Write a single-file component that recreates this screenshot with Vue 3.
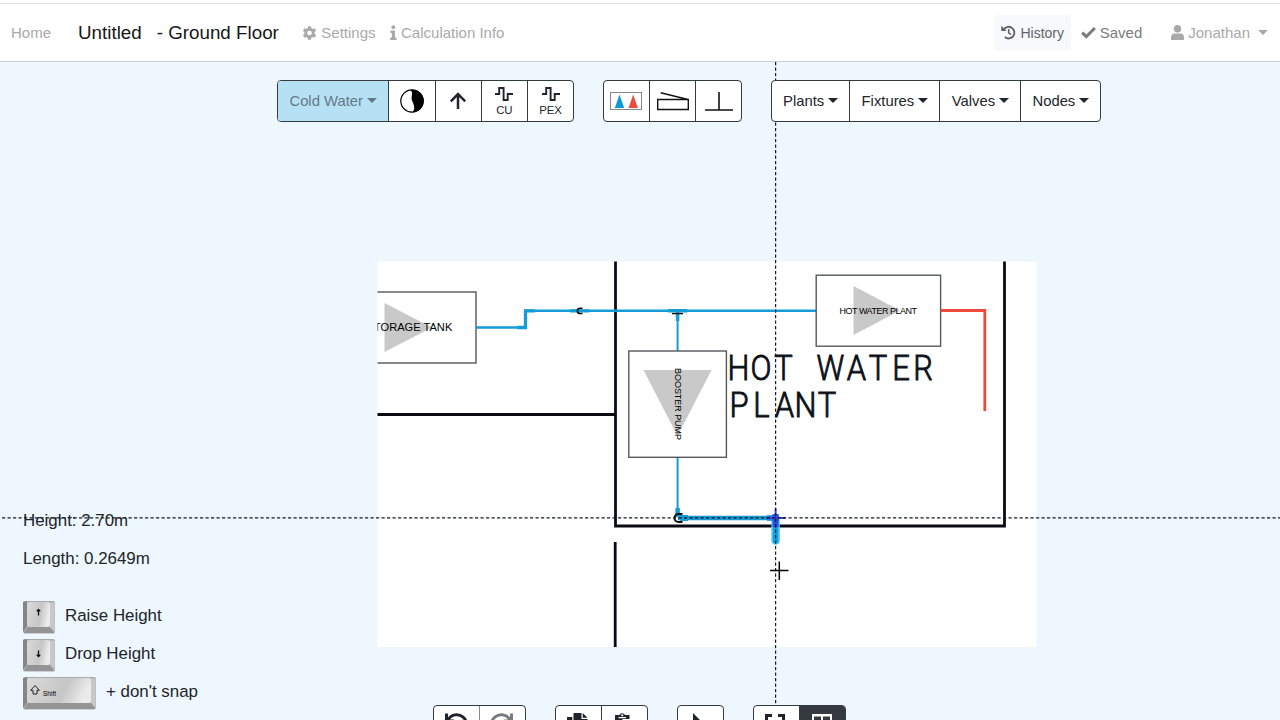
<template>
  <div class="editor">
    <header class="navbar">
      <a class="nav-home">Home</a>
      <h1 class="doc-title">Untitled</h1>
      <span class="doc-level">- Ground Floor</span>
      <a class="nav-link nav-settings">
        <svg class="icon" width="15" height="15" viewBox="0 0 16 16">
          <path
            fill="currentColor"
            fill-rule="evenodd"
            d="M6.5 0h3l.4 2.1 1.6.9 2-.8L15 4.800l-1.600 1.400v1.800l1.600 1.700-1.500 2.600-2-.8-1.600.9-.4 2.100h-3l-.4-2.100-1.600-.9-2 .8L1 9.700l1.600-1.500V6.300L1 4.800l1.500-2.600 2 .8 1.600-.9zM8 4.800a2.500 2.500 0 1 0 0 5 2.500 2.500 0 0 0 0-5z"
            transform="translate(0 1.200)"
          />
        </svg>
        Settings
      </a>
      <a class="nav-link nav-info">
        <svg class="icon" width="7" height="15" viewBox="0 0 7 15">
          <circle cx="3.300" cy="2.200" r="1.900" fill="currentColor" />
          <path fill="currentColor" d="M.4 5.500h4.500v7h1.600V15H.2v-2.500h1.700V8H.4z" />
        </svg>
        Calculation Info
      </a>
      <div class="nav-right">
        <button class="history">
          <svg class="icon" width="15" height="15" viewBox="0 0 16 16">
            <path fill="none" stroke="currentColor" stroke-width="2" d="M2.600 5.300A6.200 6.200 0 1 1 4 12.800" />
            <path fill="currentColor" d="M.3.800v5.700H6z" />
            <path fill="none" stroke="currentColor" stroke-width="1.700" d="M8.200 4.200v4.200l2.500 1.900" />
          </svg>
          History
        </button>
        <span class="saved">
          <svg class="icon" width="15" height="13" viewBox="0 0 15 13">
            <path fill="none" stroke="currentColor" stroke-width="3" d="M1.200 6.600l4.100 4L13.900 2" />
          </svg>
          Saved
        </span>
        <a class="user">
          <svg class="icon" width="13" height="15" viewBox="0 0 13 15">
            <circle cx="6.500" cy="3.800" r="3.700" fill="currentColor" />
            <path fill="currentColor" d="M0 15v-2.500C0 10 1.500 8.500 3.500 8.500h6c2 0 3.500 1.500 3.500 4V15z" />
          </svg>
          Jonathan
          <i class="caret"></i>
        </a>
      </div>
    </header>

    <main class="stage">
      <svg class="drawing" width="1280" height="658" viewBox="0 62 1280 658">
        <defs>
          <clipPath id="sheet">
            <rect x="377.500" y="261.500" width="659" height="385.500" />
          </clipPath>
        </defs>
        <rect x="377.500" y="261.500" width="659" height="385.500" fill="#fff" />

        <g clip-path="url(#sheet)">
          <!-- walls -->
          <g fill="none" stroke="#080c12" stroke-width="2.800">
            <path d="M615.500 261V526H1004.500V261" />
            <path d="M377 414.500H615" />
            <path d="M615.200 542V647" />
          </g>
          <g class="room-name" :transform="`scale(${letterScale} 1)`">
            <text v-for="row in roomName" :key="row.y" :y="row.y" text-anchor="middle">
              <tspan v-for="item in row.letters" :key="item.x" :x="item.x / letterScale">{{ item.ch }}</tspan>
            </text>
          </g>

          <!-- storage tank -->
          <rect class="plant" x="340" y="292" width="136" height="71" />
          <path class="flow-mark" d="M384.500 303v49L432 327.500z" />
          <text class="label-tank" x="452.300" y="331.300" text-anchor="end">STORAGE TANK</text>
        </g>

        <!-- cold water pipes -->
        <g fill="none" stroke="#159bd7" stroke-width="2.500">
          <path d="M476 327.500H525.500V310.800H816" />
          <path stroke-width="3.300" d="M517 327.500H525.500V310.800H535M570 310.800H589" />
          <path stroke-width="2" d="M677.600 311V351M677.600 457V517" />
          <path stroke-width="3.500" d="M677.600 312V321M668 310.800H687" />
          <path stroke-width="4.500" d="M677.600 508V517" />
        </g>
        <path fill="none" stroke="#111" stroke-width="1.600" d="M582.500 308.300h-2.500a2.600 2.600 0 0 0 0 5.200h2.500" />
        <path stroke="#111" stroke-width="1.400" d="M672 313.600H683" />

        <!-- booster pump -->
        <rect class="plant" x="628.800" y="351" width="97.600" height="106.300" />
        <path class="flow-mark" d="M643.500 370h68L677.500 436z" />
        <text class="label-pump" x="0" y="0" textLength="72" transform="translate(674.800 368) rotate(90)">BOOSTER PUMP</text>

        <!-- hot water plant -->
        <rect class="plant" x="816.200" y="275.200" width="124.400" height="71" />
        <path class="flow-mark" d="M853.500 286v49L900 310.500z" />
        <text class="label-hot" x="839.500" y="313.500" textLength="77.500">HOT WATER PLANT</text>
        <path fill="none" stroke="#ee4a3c" stroke-width="2.800" d="M940.500 310.500H984.800V411" />

        <!-- pipe being drawn -->
        <path stroke="#159bd7" stroke-width="4.500" d="M678 518H776" />
        <path stroke="#159bd7" stroke-width="6" d="M680 518H688" />
        <path stroke="#4cc5f1" stroke-width="8.500" stroke-linecap="round" d="M775.600 521V540.500" />
        <path stroke="#0f9fe2" stroke-width="5" d="M775.600 518V543" />
        <path fill="none" stroke="#111" stroke-width="2" d="M682.500 514h-4a4 4 0 0 0 0 8h4" />
        <path stroke="#1f7fe6" stroke-width="5.500" d="M767 518H779" />
        <path stroke="#1c55e6" stroke-width="6" d="M775.600 514V527" />
        <path stroke="#3a3fe0" stroke-width="2" d="M766 518H785.500M775.600 508.500V528" />

        <!-- snap guides -->
        <g stroke="#161b24" stroke-width="1.200" stroke-dasharray="3.200 2.300">
          <path d="M2 517.900H1280" />
          <path d="M775.600 62V720" />
        </g>
        <path stroke="#000" stroke-width="1.500" d="M770 570.500H788.500M779.300 561.500V580" />
      </svg>

      <div class="toolbar toolbar-top">
        <div class="btn-group">
          <button class="tool tool-system">Cold Water<i class="caret"></i></button>
          <button class="tool tool-icon">
            <svg width="24" height="24" viewBox="0 0 24 24">
              <circle cx="12" cy="12" r="11.200" fill="#fff" stroke="#000" stroke-width="1.200" />
              <path d="M10.500 1A11.200 11.200 0 1 1 12.500 23.200C16.500 18.500 12.500 14 11.700 10.500 11 7 13.500 4 10.500 1z" />
            </svg>
          </button>
          <button class="tool tool-icon">
            <svg width="18" height="18" viewBox="0 0 18 18">
              <path fill="none" stroke="#212529" stroke-width="2.500" d="M9 17V2.500M1.800 9.300L9 2.100l7.200 7.200" />
            </svg>
          </button>
          <button v-for="name in ['CU', 'PEX']" :key="name" class="tool tool-icon tool-pipe">
            <svg width="18" height="14" viewBox="0 0 18 14">
              <path fill="none" stroke="#212529" stroke-width="1.900" d="M0 7H4.200V1H8.600V13H12.700V7H18" />
            </svg>
            <span>{{ name }}</span>
          </button>
        </div>

        <div class="btn-group">
          <button class="tool tool-icon">
            <svg width="32" height="20" viewBox="0 0 32 20">
              <rect x=".5" y="1.500" width="31" height="17" fill="#fff" stroke="#888" />
              <path fill="#0f98d8" d="M9.500 3.500L14.200 17H4.800z" />
              <path fill="#ee4a3c" d="M23.200 3.500L27.900 17h-9.400z" />
            </svg>
          </button>
          <button class="tool tool-icon">
            <svg width="32" height="20" viewBox="0 0 32 20">
              <path fill="none" stroke="#111" stroke-width="1.400" d="M.7 8.500H31.300V18.500H.7zM3.700 1.700L31 8.500" />
            </svg>
          </button>
          <button class="tool tool-icon">
            <svg width="28" height="20" viewBox="0 0 28 20">
              <path fill="none" stroke="#111" stroke-width="1.600" d="M0 19H28M14 1V19" />
            </svg>
          </button>
        </div>

        <div class="btn-group">
          <button
            v-for="menu in menus"
            :key="menu.label"
            class="tool tool-menu"
            :style="{ width: menu.width + 'px' }"
          >
            {{ menu.label }}<i class="caret"></i>
          </button>
        </div>
      </div>

      <section class="hints">
        <p class="reading">Height: 2.70m</p>
        <p class="reading">Length: 0.2649m</p>
        <ul class="keys">
          <li v-for="hint in hints" :key="hint.text">
            <svg class="key" :width="hint.width" height="34" :viewBox="`0 0 ${hint.width} 34`">
              <defs>
                <linearGradient :id="hint.id" x1="0" x2="1" y1="0" y2=".2">
                  <stop offset="0" stop-color="#dadada" />
                  <stop offset=".65" stop-color="#c6c6c6" />
                  <stop offset="1" stop-color="#ebebeb" />
                </linearGradient>
              </defs>
              <rect x=".3" y="1" :width="hint.width - .6" height="32.500" rx="1.500" fill="#a9a9a9" />
              <path fill="#858585" d="M0 2l4-1v25L0 32z" />
              <path fill="#949494" :d="`M1 33l4-6H${hint.width - 5}l4 6z`" />
              <path fill="#c8c8c8" :d="`M${hint.width - 5} 2l4 1v28l-4-4z`" />
              <rect x="4" y="2" :width="hint.width - 9" height="25" rx="2" :fill="`url(#${hint.id})`" />
              <path v-if="hint.id === 'up'" fill="none" stroke="#111" stroke-width="1.300" d="M15.500 15.500V9.500M13.800 11.300l1.700-1.900 1.700 1.900" />
              <path v-if="hint.id === 'down'" fill="none" stroke="#111" stroke-width="1.300" d="M15.500 12.500V18.500M13.800 16.700l1.700 1.900 1.700-1.900" />
              <template v-if="hint.id === 'shift'">
                <path fill="none" stroke="#222" d="M12 9.500l4.300 4.800H14V18h-4v-3.700H7.700z" />
                <text class="key-text" x="20" y="19.500">Shift</text>
              </template>
            </svg>
            <span>{{ hint.text }}</span>
          </li>
        </ul>
      </section>

      <div class="toolbar toolbar-bottom">
        <div class="btn-group">
          <button class="tool tool-icon">
            <svg width="24" height="24" viewBox="0 0 24 24">
              <path fill="none" stroke="#212529" stroke-width="3" d="M4 8A9.800 9.800 0 1 1 4 17" />
              <path fill="#212529" d="M1 1.500h3v6h6v3H1z" />
            </svg>
          </button>
          <button class="tool tool-icon disabled">
            <svg width="24" height="24" viewBox="0 0 24 24">
              <path fill="none" stroke="#212529" stroke-width="3" d="M20 8A9.800 9.800 0 1 0 20 17" />
              <path fill="#212529" d="M23 1.500h-3v6h-6v3h9z" />
            </svg>
          </button>
        </div>
        <div class="btn-group">
          <button class="tool tool-icon">
            <svg width="21" height="24" viewBox="0 0 21 24">
              <path fill="#212529" d="M6.500 1h8v6h6v12h-14zM15.700 1l4.800 4.800h-4.800zM0 5h5.300v15.200H15V23H0z" />
            </svg>
          </button>
          <button class="tool tool-icon">
            <svg width="18" height="24" viewBox="0 0 18 24">
              <path fill="#212529" fill-rule="evenodd" d="M0 3h4.500a3 3 0 0 1 5.500 0h4.500v4H7.500v13H0zM7.200 2.200a1.100 1.100 0 1 0 .1 0zM3.500 5v1.200h7.500V5z" />
              <path fill="#212529" d="M9 8.500h5v4h4V23H9zM15 8.500l3 3h-3z" />
            </svg>
          </button>
        </div>
        <div class="btn-group">
          <button class="tool tool-icon">
            <svg width="16" height="24" viewBox="0 0 16 24">
              <path fill="#212529" d="M1 1l14.500 14.500H9.800l3 6.500-2.900 1.200L7 16.500 1 21.500z" />
            </svg>
          </button>
        </div>
        <div class="btn-group">
          <button class="tool tool-icon">
            <svg width="22" height="22" viewBox="0 0 22 22">
              <path fill="none" stroke="#212529" stroke-width="3" d="M2.500 8V2.500H8M14 2.500h5.500V8M2.500 14v5.500H8M14 19.500h5.500V14" />
            </svg>
          </button>
          <button class="tool tool-icon active">
            <svg width="20" height="22" viewBox="0 0 20 22">
              <path fill="#fff" fill-rule="evenodd" d="M0 1h20v18H0zM2 3.500h7v5.500H2zM11 3.500h7v5.500h-7zM2 11h7v5.500H2zM11 11h7v5.500h-7z" />
            </svg>
          </button>
        </div>
      </div>
    </main>
  </div>
</template>

<script setup>
const menus = [
  { label: 'Plants', width: 77.5 },
  { label: 'Fixtures', width: 90 },
  { label: 'Valves', width: 81 },
  { label: 'Nodes', width: 80 }
]

const hints = [
  { id: 'up', width: 32, text: 'Raise Height' },
  { id: 'down', width: 32, text: 'Drop Height' },
  { id: 'shift', width: 73, text: "+ don't snap" }
]

// plan lettering is narrow, each letter is centred on its own x
const letterScale = 0.86

const placeLetters = (word, centers) => [...word].map((ch, i) => ({ ch, x: centers[i] }))

const roomName = [
  {
    y: 380.5,
    letters: [
      ...placeLetters('HOT', [738.5, 761, 783.5]),
      ...placeLetters('WATER', [830.5, 856.5, 878, 901, 923])
    ]
  },
  { y: 417, letters: placeLetters('PLANT', [739, 761.5, 784.5, 805.5, 827]) }
]
</script>

<style>
body {
  margin: 0;
  overflow: hidden;
}
</style>

<style scoped>
.editor {
  display: flex;
  flex-direction: column;
  height: 720px;
  overflow: hidden;
  background: #eef6fe;
  color: #212529;
  font-family: 'Liberation Sans', Arial, sans-serif;
  font-size: 15px;
}

button {
  margin: 0;
  padding: 0;
  border: 0;
  background: none;
  color: inherit;
  font: inherit;
}

svg {
  display: block;
  flex: none;
}

.navbar {
  display: flex;
  align-items: center;
  box-sizing: border-box;
  height: 62px;
  padding: 4px 12px 0 11px;
  border-bottom: 1px solid #cfd1d6;
  background: linear-gradient(#fff 3px, #dedede 3px, #dedede 4px, #fff 4px);
  color: #a9a9a9;
  white-space: nowrap;
}

.doc-title,
.doc-level {
  margin: 0;
  color: #161616;
  font-size: 18.800px;
  font-weight: 400;
}

.doc-title {
  margin-left: 27px;
}

.doc-level {
  margin-left: 15px;
}

.nav-link,
.history,
.saved,
.user {
  display: flex;
  align-items: center;
  gap: 4px;
}

.nav-settings {
  margin-left: 23.500px;
}

.nav-info {
  margin-left: 14.500px;
}

.nav-right {
  display: flex;
  align-items: center;
  margin-left: auto;
}

.history {
  justify-content: center;
  box-sizing: border-box;
  width: 77px;
  height: 36px;
  padding-left: 1px;
  border-radius: 2px;
  background: #f8f9fd;
  color: #606266;
  font-size: 14px;
}

.saved {
  margin-left: 10px;
  color: #7b7b7b;
}

.user {
  margin-left: 29px;
}

.caret {
  width: 0;
  height: 0;
  margin-left: 4px;
  border: 5px solid transparent;
  border-top-color: currentColor;
  border-bottom: 0;
}

.stage {
  position: relative;
  display: flex;
  flex: 1;
  flex-direction: column;
  min-height: 0;
}

.drawing {
  position: absolute;
  top: 0;
  left: 0;
}

.plant {
  fill: #fff;
  stroke: #55585c;
  stroke-width: 1.400;
}

.flow-mark {
  fill: #c9c9c9;
}

.room-name {
  fill: #0c1018;
  stroke: #0c1018;
  stroke-width: 0.9;
  font-family: Roboto, 'Liberation Sans', sans-serif;
  font-size: 36px;
  font-weight: 300;
}

.label-tank {
  font-size: 11.100px;
}

.label-pump,
.label-hot {
  font-size: 9px;
}

.toolbar {
  position: relative;
  display: flex;
  flex: none;
  gap: 28.600px;
}

.toolbar-top {
  padding: 18px 0 0 277px;
  font-size: 14.800px;
}

.toolbar-bottom {
  height: 15px;
  padding-left: 433px;
}

.btn-group {
  display: flex;
  box-sizing: border-box;
  height: 42px;
  overflow: hidden;
  border: 1px solid #343a40;
  border-radius: 4px;
  background: #fff;
}

.tool {
  display: flex;
  align-items: center;
  justify-content: center;
  box-sizing: border-box;
}

.tool + .tool {
  border-left: 1px solid #343a40;
}

.tool-system,
.tool-menu {
  padding-bottom: 1px;
}

.tool-system {
  width: 110.400px;
  background: #b6e1f4;
  color: #647985;
}

.tool-icon {
  width: 46.200px;
}

.tool-icon:first-child {
  width: 45.200px;
}

.toolbar-bottom .tool {
  padding: 0 2px 4px 0;
}

.tool-pipe {
  flex-direction: column;
  gap: 3px;
  padding-top: 1px;
  font-size: 11.400px;
  line-height: 13px;
}

.disabled {
  opacity: 0.6;
}

.active {
  background: #343a40;
}

.hints {
  position: relative;
  flex: 1;
  box-sizing: border-box;
  width: 260px;
  min-height: 0;
  height: 0;
  padding: 388px 0 0 23px;
  font-size: 16.900px;
  line-height: 22px;
}

.reading {
  margin: 0 0 16px;
}

.keys {
  margin: 30px 0 0;
  padding: 0;
  list-style: none;
}

.keys li {
  display: flex;
  align-items: flex-start;
  gap: 10px;
  height: 38px;
}

.keys li span {
  padding-top: 5px;
}

.key-text {
  font-size: 6.500px;
}
</style>
